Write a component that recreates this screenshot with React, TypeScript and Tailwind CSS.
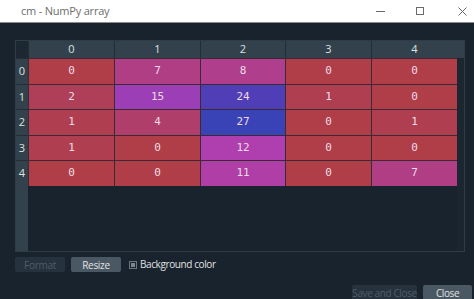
import React from 'react'

const data = [
  [0, 7, 8, 0, 0],
  [2, 15, 24, 1, 0],
  [1, 4, 27, 0, 1],
  [1, 0, 12, 0, 0],
  [0, 0, 11, 0, 7],
]
const colWidths = ['w-[86px]', 'w-[86px]', 'w-[85px]', 'w-[86px]', 'w-[86px]']
const rowHeights = ['h-[26px]', 'h-[25px]', 'h-[26px]', 'h-[25px]', 'h-[26px]']

// spyder-style hue mapping: max -> blue, min -> red, blended over the dark bg
function cellColor(v: number) {
  const h = (0.66 + (0.33 * (27 - v)) / 27) * 360
  const c = 0.7
  const x = c * (1 - Math.abs(((h / 60) % 2) - 1))
  const m = 1 - c
  let r = 0, g = 0, b = 0
  if (h < 60) [r, g, b] = [c, x, 0]
  else if (h < 120) [r, g, b] = [x, c, 0]
  else if (h < 180) [r, g, b] = [0, c, x]
  else if (h < 240) [r, g, b] = [0, x, c]
  else if (h < 300) [r, g, b] = [x, 0, c]
  else [r, g, b] = [c, 0, x]
  const a = 0.65
  const bg = [25, 35, 45]
  const mix = (ch: number, i: number) => Math.round(a * (ch + m) * 255 + (1 - a) * bg[i])
  return `rgb(${mix(r, 0)}, ${mix(g, 1)}, ${mix(b, 2)})`
}

function TitleBar() {
  return (
    <div className="h-[23px] bg-white border-b border-[#8c8c8c] flex items-center shrink-0">
      <span className="pl-[21px] text-[11px] tracking-[-0.2px] text-[#6e6e6e]" style={{ fontFamily: '"Open Sans", sans-serif' }}>
        cm - NumPy array
      </span>
      <div className="ml-auto flex items-center">
        <div className="w-[9px] h-px bg-[#6a6a6a] mr-[31px]" />
        <div className="w-[8px] h-[8px] border border-[#6a6a6a] mr-[34px]" />
        <svg width="9" height="9" viewBox="0 0 9 9" className="mr-[7px]">
          <path d="M0.5 0.5 L8.5 8.5 M8.5 0.5 L0.5 8.5" stroke="#6a6a6a" strokeWidth="1" />
        </svg>
      </div>
    </div>
  )
}

function ArrayTable() {
  return (
    <div className="w-[450px] h-[212px] border border-[#2e3c47] flex flex-col">
      <div className="flex h-[17px] shrink-0 bg-[#32414B] text-[#dfe1e3] text-[11px]">
        <div className="w-[12px] bg-[#1d2731]" />
        {colWidths.map((w, i) => (
          <div key={i} className={`${w} flex items-center justify-center border-l border-[#222d37]`}>
            {i}
          </div>
        ))}
        <div className="w-[7px]" />
      </div>
      <div className="flex flex-1 min-h-0">
        <div className="w-[12px] bg-[#32414B] text-[#dfe1e3] text-[11px] flex flex-col">
          {rowHeights.map((h, i) => (
            <div key={i} className={`${h} flex items-center justify-center border-t border-[#222d37]`}>
              {i}
            </div>
          ))}
        </div>
        <div className="w-[429px] flex flex-col">
          {data.map((row, r) => (
            <div key={r} className={`flex ${rowHeights[r]}`}>
              {row.map((v, c) => (
                <div
                  key={c}
                  className={`${colWidths[c]} flex items-center justify-center border-t border-l border-[#3b2a36] text-[11px] text-[#efdbe6]`}
                  style={{ backgroundColor: cellColor(v), fontFamily: '"DejaVu Sans Mono", monospace' }}
                >
                  {v}
                </div>
              ))}
            </div>
          ))}
        </div>
        <div className="w-[7px] bg-[#1b2630]" />
      </div>
    </div>
  )
}

export default function App() {
  return (
    <div
      className="w-[474px] h-[299px] overflow-hidden flex flex-col bg-[#19232D]"
      style={{ fontFamily: '"Open Sans", "Noto Sans", sans-serif' }}
    >
      <TitleBar />
      <div className="flex-1 flex flex-col pl-[15px] pt-[17px]">
        <ArrayTable />
        <div className="flex items-center mt-[5px] h-[15px] text-[10px] tracking-[-0.3px] whitespace-nowrap">
          <button className="w-[50px] h-[15px] bg-[#26323d] text-[#4f5d68] rounded-[2px] leading-none">Format</button>
          <button className="w-[50px] h-[15px] ml-[6px] bg-[#4a5864] text-[#e0e1e3] rounded-[2px] leading-none">Resize</button>
          <div className="ml-[8px] w-[8px] h-[8px] border border-[#6b7883] bg-[#19232D] flex items-center justify-center">
            <div className="w-[4px] h-[4px] bg-[#7a8791]" />
          </div>
          <span className="ml-[3px] text-[#e0e1e3] text-[10px] tracking-[-0.4px]">Background color</span>
        </div>
        <div className="flex justify-end mt-[13px] pr-[2px] text-[10px] tracking-[-0.4px] whitespace-nowrap">
          <button className="w-[65px] h-[16px] bg-[#26323d] text-[#4f5d68] rounded-[2px] leading-none">Save and Close</button>
          <button className="w-[49px] h-[16px] ml-[6px] bg-[#4a5864] text-[#e0e1e3] rounded-[2px] leading-none">Close</button>
        </div>
      </div>
    </div>
  )
}
